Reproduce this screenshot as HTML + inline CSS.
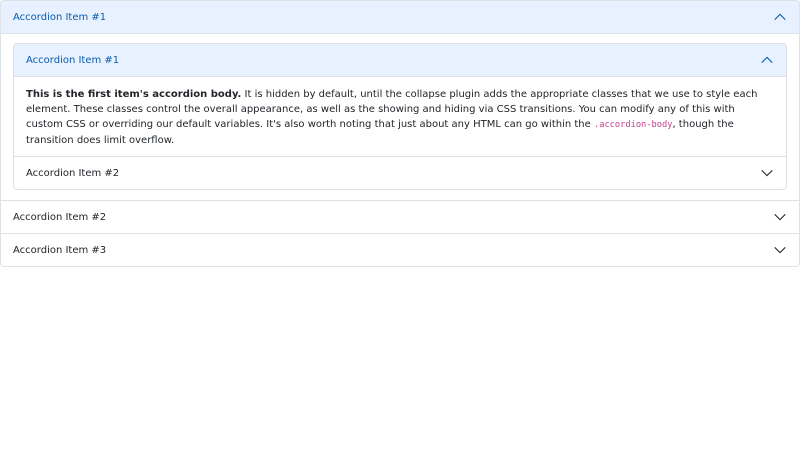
<!DOCTYPE html>
<html><head><style>
*{box-sizing:border-box;margin:0;padding:0}
body{width:800px;height:450px;background:#fff;font-family:"DejaVu Sans","Liberation Sans",sans-serif;font-size:10px;color:#212529}
.acc{border:1px solid #dee2e6;border-radius:4px;overflow:hidden}
.h{height:33px;display:flex;align-items:center;justify-content:space-between;padding:0 12px;border-top:1px solid #dee2e6}
.acc>.h:first-child{border-top:none;height:33px}
.h.on{background:#e7f1ff;color:#0b5cad;border-bottom:1px solid #dee2e6}
.h svg{width:14px;height:14px}
.ob{padding:9px 12px 10px 12px}
.ib{padding:10px 12px 8px;line-height:15px}
code{font-family:"DejaVu Sans Mono",monospace;color:#c2418a;font-size:8.7px}
</style></head><body>
<div class="acc" style="height:267px">
 <div class="h on"><span>Accordion Item #1</span><svg viewBox="0 0 16 16"><path d="M2 11l6-6 6 6" fill="none" stroke="#0b5cad" stroke-width="1.3"/></svg></div>
 <div class="ob">
  <div class="acc">
   <div class="h on"><span>Accordion Item #1</span><svg viewBox="0 0 16 16"><path d="M2 11l6-6 6 6" fill="none" stroke="#0b5cad" stroke-width="1.3"/></svg></div>
   <div class="ib"><b>This is the first item's accordion body.</b> It is hidden by default, until the collapse plugin adds the appropriate classes that we use to style each element. These classes control the overall appearance, as well as the showing and hiding via CSS transitions. You can modify any of this with custom CSS or overriding our default variables. It's also worth noting that just about any HTML can go within the <code>.accordion-body</code>, though the transition does limit overflow.</div>
   <div class="h"><span>Accordion Item #2</span><svg viewBox="0 0 16 16"><path d="M2 5l6 6 6-6" fill="none" stroke="#212529" stroke-width="1.3"/></svg></div>
  </div>
 </div>
 <div class="h"><span>Accordion Item #2</span><svg viewBox="0 0 16 16"><path d="M2 5l6 6 6-6" fill="none" stroke="#212529" stroke-width="1.3"/></svg></div>
 <div class="h"><span>Accordion Item #3</span><svg viewBox="0 0 16 16"><path d="M2 5l6 6 6-6" fill="none" stroke="#212529" stroke-width="1.3"/></svg></div>
</div>
</body></html>
